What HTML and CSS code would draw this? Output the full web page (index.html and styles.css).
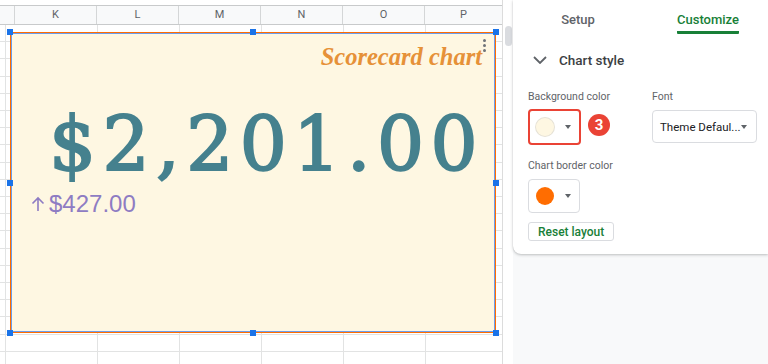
FILE: index.html
```html
<!DOCTYPE html>
<html lang="en">
<head>
    <meta charset="UTF-8">
    <meta name="viewport" content="width=device-width, initial-scale=1.0">
    <title>Scorecard chart - Customize</title>
    <link rel="stylesheet" href="styles.css">
</head>
<body>
    <div class="app">
        <div class="sheet">
            <div class="col-heads">
                <div class="col-head first"></div>
                <div class="col-head">K</div>
                <div class="col-head">L</div>
                <div class="col-head">M</div>
                <div class="col-head">N</div>
                <div class="col-head">O</div>
                <div class="col-head last">P</div>
            </div>
            <div class="cells">
                <!-- chart floats over the grid -->
                <div class="chart">
                    <div class="chart-title">Scorecard chart</div>
                    <div class="kebab"><span></span><span></span><span></span></div>
                    <div class="key-value">$2,201.00</div>
                    <div class="delta">
                        <svg width="16" height="16" viewBox="0 0 16 16">
                            <path d="M8 15V2M2.5 7.5L8 2l5.5 5.5" fill="none" stroke="#8e7cc3" stroke-width="1.6"/>
                        </svg>
                        <span>$427.00</span>
                    </div>
                    <span class="handle tl"></span>
                    <span class="handle tm"></span>
                    <span class="handle tr"></span>
                    <span class="handle ml"></span>
                    <span class="handle mr"></span>
                    <span class="handle bl"></span>
                    <span class="handle bm"></span>
                    <span class="handle br"></span>
                </div>
            </div>
        </div>
        <div class="scrollbar"><div class="thumb"></div></div>

        <div class="side">
            <div class="panel">
                <div class="tabs">
                    <div class="tab">Setup</div>
                    <div class="tab active">Customize</div>
                </div>

                <div class="section-head">
                    <svg width="14" height="8" viewBox="0 0 14 8">
                        <path d="M1 1l6 6 6-6" fill="none" stroke="#5f6368" stroke-width="1.8"/>
                    </svg>
                    <span>Chart style</span>
                </div>

                <div class="fields">
                    <div class="field">
                        <div class="label">Background color</div>
                        <div class="picker-row">
                            <div class="color-btn highlighted">
                                <span class="swatch cream"></span>
                                <span class="caret"></span>
                            </div>
                            <div class="step">3</div>
                        </div>
                    </div>
                    <div class="field">
                        <div class="label">Font</div>
                        <div class="select">
                            <span>Theme Defaul...</span>
                            <span class="caret"></span>
                        </div>
                    </div>
                </div>

                <div class="label border-label">Chart border color</div>
                <div class="color-btn">
                    <span class="swatch orange"></span>
                    <span class="caret"></span>
                </div>

                <button class="reset">Reset layout</button>
            </div>
        </div>
    </div>
</body>
</html>
```

FILE: styles.css
```css
body {
    margin: 0;
    width: 768px;
    height: 364px;
    overflow: hidden;
    font-family: Roboto, "Liberation Sans", Arial, sans-serif;
    background: #fff;
}
.app {
    display: flex;
    height: 364px;
}

/* spreadsheet */
.sheet {
    width: 502px;
    flex-shrink: 0;
    display: flex;
    flex-direction: column;
}
.col-heads {
    display: flex;
    margin-top: 5px;
    height: 18px;
    border-top: 1px solid #c8cacb;
    border-bottom: 1px solid #c8cacb;
    background: #f8f9fa;
}
.col-head {
    width: 81px;
    border-right: 1px solid #d4d6d7;
    font-size: 11px;
    line-height: 18px;
    color: #5f6368;
    text-align: center;
}
.col-head.first {
    width: 14px;
}
.col-head.last {
    width: 77px;
    border-right: none;
}
.cells {
    position: relative;
    flex: 1;
    background-image:
        repeating-linear-gradient(to bottom, transparent 0 16.2px, #e2e3e3 16.2px 17.2px),
        repeating-linear-gradient(to right, transparent 0 81px, #e2e3e3 81px 82px);
    background-position: 0 0, 16px 0;
}
.scrollbar {
    width: 10px;
    flex-shrink: 0;
    border-left: 1px solid #dcdcdc;
    background: #fff;
}
.thumb {
    width: 7px;
    height: 20px;
    margin: 26px 0 0 2px;
    border-radius: 4px;
    background: #dadce0;
}

/* chart */
.chart {
    position: absolute;
    left: 10px;
    top: 7px;
    width: 484px;
    height: 299px;
    border: 1px solid #ff6d01;
    box-shadow: inset 0 0 0 1px #6d9eeb;
    background: #fef7e2;
    display: flex;
    flex-direction: column;
}
.chart-title {
    align-self: flex-end;
    margin: 10px 13px 0 0;
    font-family: "Liberation Serif", "Times New Roman", serif;
    font-weight: bold;
    font-style: italic;
    font-size: 24.5px;
    line-height: 27px;
    color: #e69138;
}
.kebab {
    position: absolute;
    right: 9px;
    top: 6px;
    display: flex;
    flex-direction: column;
    gap: 2px;
}
.kebab span {
    width: 3px;
    height: 3px;
    border-radius: 50%;
    background: #6f7378;
}
.key-value {
    margin: 37px 0 0 38px;
    font-family: "DejaVu Serif", "Liberation Serif", serif;
    font-size: 74px;
    line-height: 74px;
    letter-spacing: 6.5px;
    color: #45818e;
    -webkit-text-stroke: 2px #45818e;
}
.delta {
    display: flex;
    align-items: center;
    gap: 3px;
    margin: 10px 0 0 19px;
    font-family: "Liberation Sans", Arial, sans-serif;
    font-size: 24px;
    line-height: 26px;
    color: #8e7cc3;
}
.handle {
    position: absolute;
    width: 6px;
    height: 6px;
    background: #1a73e8;
}
.handle.tl { left: -4px; top: -4px; }
.handle.tm { left: 239px; top: -4px; }
.handle.tr { right: -4px; top: -4px; }
.handle.ml { left: -4px; top: 147px; }
.handle.mr { right: -4px; top: 147px; }
.handle.bl { left: -4px; bottom: -4px; }
.handle.bm { left: 239px; bottom: -4px; }
.handle.br { right: -4px; bottom: -4px; }

/* side panel */
.side {
    flex: 1;
    background: #f8f9fa;
}
.panel {
    height: 254px;
    box-sizing: border-box;
    padding: 0 0 0 15px;
    background: #fff;
    border-bottom-left-radius: 8px;
    box-shadow: 0 1px 3px rgba(60, 64, 67, 0.3), 0 0 1px rgba(60, 64, 67, 0.2);
}
.tabs {
    display: flex;
    height: 34px;
    margin-left: -15px;
}
.tab {
    width: 130px;
    text-align: center;
    font-size: 13px;
    font-weight: 500;
    line-height: 16px;
    padding-top: 12px;
    color: #5f6368;
}
.tab.active {
    width: 62px;
    margin-left: 34px;
    height: 19px;
    color: #188038;
    border-bottom: 3px solid #188038;
    border-radius: 0 0 1px 1px;
}
.section-head {
    display: flex;
    align-items: center;
    gap: 12px;
    margin: 18px 0 0 5px;
    font-size: 13.5px;
    font-weight: 500;
    color: #3c4043;
}
.fields {
    display: flex;
    margin-top: 22px;
}
.field:first-child {
    width: 124px;
}
.label {
    font-size: 10.5px;
    line-height: 14px;
    color: #5f6368;
}
.picker-row {
    display: flex;
    align-items: center;
    gap: 7px;
    margin-top: 5px;
}
.color-btn {
    width: 43px;
    height: 32px;
    padding-left: 7px;
    border: 1px solid #dadce0;
    border-radius: 4px;
    display: flex;
    align-items: center;
    gap: 11px;
}
.color-btn.highlighted {
    border: 2px solid #ea4335;
    padding-left: 6px;
}
.swatch {
    width: 18px;
    height: 18px;
    border-radius: 50%;
}
.swatch.cream {
    background: #fef7e2;
    box-shadow: 0 0 0 1px #e6e2d6;
}
.swatch.orange {
    background: #ff6d01;
}
.caret {
    width: 0;
    height: 0;
    border-left: 3.5px solid transparent;
    border-right: 3.5px solid transparent;
    border-top: 4px solid #5f6368;
}
.step {
    width: 22px;
    height: 22px;
    border-radius: 50%;
    background: #ea4335;
    color: #fff;
    font-weight: bold;
    font-size: 15px;
    line-height: 22px;
    text-align: center;
    margin-top: -4px;
}
.select {
    display: flex;
    align-items: center;
    justify-content: space-between;
    width: 105px;
    height: 33px;
    margin-top: 6px;
    box-sizing: border-box;
    padding: 0 9px 0 7px;
    border: 1px solid #dadce0;
    border-radius: 4px;
    font-size: 11.5px;
    white-space: nowrap;
    color: #202124;
}
.border-label {
    margin-top: 14px;
}
.border-label + .color-btn {
    margin-top: 6px;
}
.reset {
    display: block;
    margin-top: 9px;
    padding: 0 9px;
    height: 19px;
    border: 1px solid #dadce0;
    border-radius: 3px;
    background: #fff;
    font-family: Roboto, Arial, sans-serif;
    font-size: 12px;
    font-weight: 500;
    color: #188038;
}
```
